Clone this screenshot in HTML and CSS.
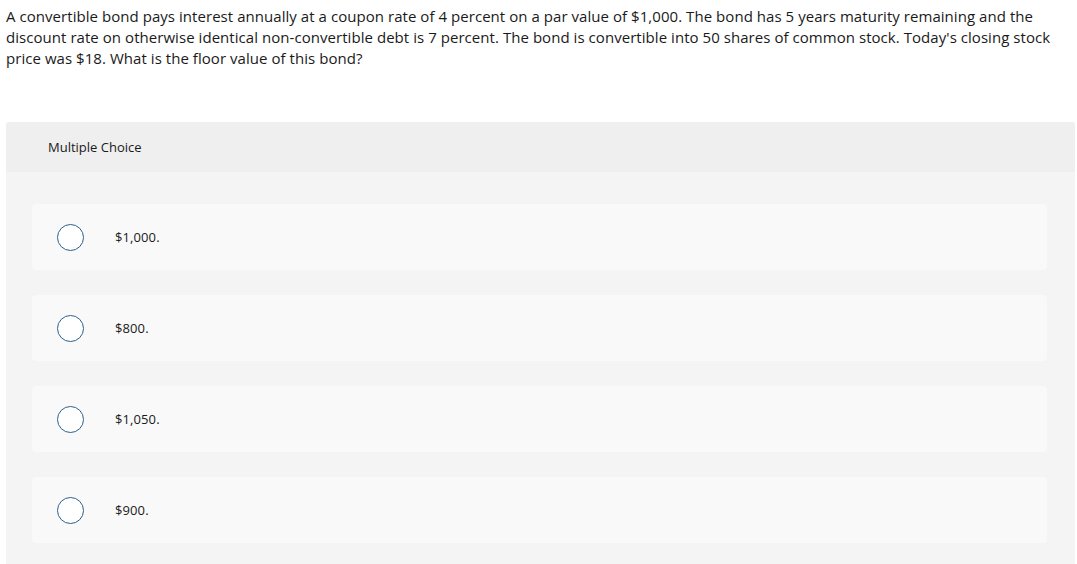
FILE: index.html
```html
<!DOCTYPE html>
<html>
<head>
<meta charset="utf-8">
<link rel="stylesheet" href="styles.css">
</head>
<body>
<div class="question">A convertible bond pays interest annually at a coupon rate of 4 percent on a par value of $1,000. The bond has 5 years maturity remaining and the discount rate on otherwise identical non-convertible debt is 7 percent. The bond is convertible into 50 shares of common stock. Today's closing stock price was $18. What is the floor value of this bond?</div>
<div class="mc">
  <div class="mc-head">Multiple Choice</div>
  <div class="mc-body">
    <div class="option"><span class="radio"></span><span class="label">$1,000.</span></div>
    <div class="option"><span class="radio"></span><span class="label">$800.</span></div>
    <div class="option"><span class="radio"></span><span class="label">$1,050.</span></div>
    <div class="option"><span class="radio"></span><span class="label">$900.</span></div>
  </div>
</div>
</body>
</html>
```
FILE: styles.css
```css
html, body { margin: 0; padding: 0; background: #fff; }
body {
  font-family: "Open Sans", "Liberation Sans", sans-serif;
  color: #1a1a1a;
  padding: 6px 2px 0 6px;
}
.question {
  font-size: 15px;
  line-height: 21px;
  letter-spacing: 0.05px;
  width: 1055px;
}
.mc {
  margin-top: 53px;
  background: #f4f4f4;
  border-radius: 3px 3px 0 0;
  overflow: hidden;
}
.mc-head {
  height: 50px;
  background: #efefef;
  display: flex;
  align-items: center;
  padding-left: 42px;
  font-size: 13px;
}
.mc-body {
  padding: 32px 28px 30px 26px;
  display: flex;
  flex-direction: column;
  gap: 25px;
}
.option {
  height: 66px;
  background: #f9f9f9;
  border-radius: 4px;
  display: flex;
  align-items: center;
  padding-left: 25px;
}
.radio {
  width: 25px;
  height: 25px;
  border: 1.5px solid #2a5f8f;
  border-radius: 50%;
  background: #fff;
  flex: none;
}
.label {
  margin-left: 31px;
  font-size: 13px;
  letter-spacing: 0.1px;
}
```
